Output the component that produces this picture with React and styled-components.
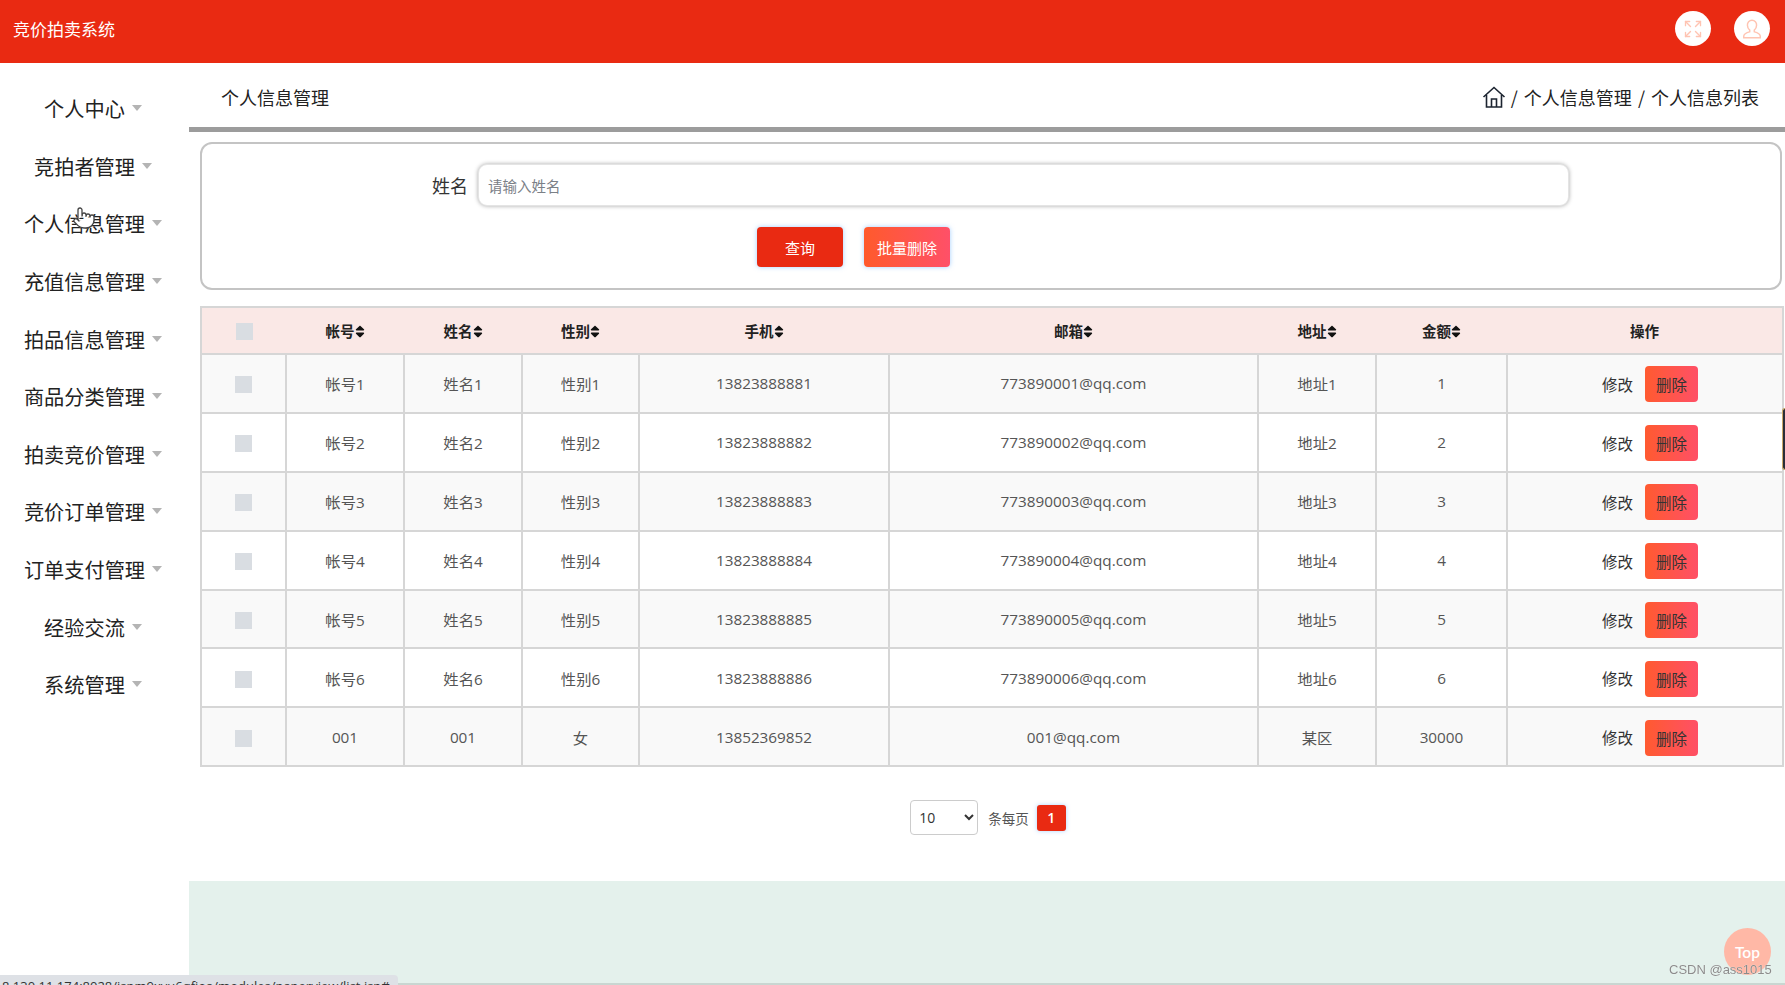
import React from 'react';
import styled, { createGlobalStyle } from 'styled-components';
import { FaSort } from 'react-icons/fa';
import { Expand, Pointer } from 'lucide-react';

const GlobalStyle = createGlobalStyle`
  html, body {
    margin: 0;
    padding: 0;
    height: 985px;
    overflow: hidden;
    background: #fff;
    font-family: "Open Sans", "Noto Sans CJK SC", sans-serif;
    color: #222;
  }
  * { box-sizing: border-box; }
`;

const Page = styled.div`
  height: 985px;
  display: flex;
  flex-direction: column;
`;

const Header = styled.header`
  height: 63px;
  flex: none;
  background: #e92a12;
  display: flex;
  align-items: center;
  justify-content: space-between;
  padding: 0 15px 6px 13px;
`;

const Brand = styled.div`
  color: #fff;
  font-size: 17px;
  font-family: "Noto Sans CJK SC", sans-serif;
`;

const HeaderIcons = styled.div`
  display: flex;
  gap: 23px;
`;

const RoundIcon = styled.div`
  width: 36px;
  height: 35px;
  border-radius: 50%;
  background: #fff;
  color: #ffc4b2;
  display: flex;
  align-items: center;
  justify-content: center;
`;

const Body = styled.div`
  flex: 1;
  display: flex;
  min-height: 0;
`;

const Sidebar = styled.nav`
  width: 189px;
  flex: none;
  padding-top: 17px;
  background: #fff;
`;

const MenuItem = styled.div`
  height: 57.6px;
  display: flex;
  align-items: center;
  justify-content: center;
  gap: 7px;
  padding-right: 3px;
  font-size: 20.2px;
  color: #222;
  font-family: "Noto Sans CJK SC", sans-serif;
`;

const Caret = styled.span`
  width: 0;
  height: 0;
  margin-top: -1px;
  border-left: 5.5px solid transparent;
  border-right: 5.5px solid transparent;
  border-top: 6px solid #b4b4b4;
`;

const Main = styled.main`
  flex: 1;
  min-width: 0;
  display: flex;
  flex-direction: column;
`;

const Crumbs = styled.div`
  height: 69px;
  flex: none;
  border-bottom: 5px solid #9c9c9c;
  display: flex;
  align-items: center;
  justify-content: space-between;
  padding: 4px 26px 0 32px;
  font-size: 18px;
  color: #222;
  font-family: "Noto Sans CJK SC", sans-serif;
`;

const CrumbPath = styled.div`
  display: flex;
  align-items: center;
  gap: 5px;
  word-spacing: 2px;
`;

const Content = styled.div`
  padding: 10px 3px 0 11px;
`;

const SearchCard = styled.section`
  height: 148px;
  border: 2px solid #c4c4c4;
  border-radius: 12px;
  padding-top: 20px;
`;

const SearchRow = styled.div`
  display: flex;
  align-items: center;
  gap: 10px;
  padding-left: 230px;
`;

const FieldLabel = styled.label`
  width: 36px;
  font-size: 18px;
  color: #333;
  font-family: "Noto Sans CJK SC", sans-serif;
  white-space: nowrap;
`;

const SearchInput = styled.input`
  width: 1091px;
  height: 42px;
  padding: 0 9px;
  border: 1px solid #e4e4e4;
  border-radius: 9px;
  outline: none;
  box-shadow: 0 0 4px rgba(0, 0, 0, 0.35);
  font-size: 14.5px;
  font-family: "Noto Sans CJK SC", sans-serif;
  &::placeholder { color: #7b8087; }
`;

const ButtonRow = styled.div`
  display: flex;
  gap: 21px;
  margin-top: 21px;
  padding-left: 555px;
`;

const ActionButton = styled.button`
  width: 86px;
  height: 40px;
  border: none;
  border-radius: 4px;
  color: #fff;
  font-size: 15px;
  font-family: "Noto Sans CJK SC", sans-serif;
  background: ${(p) => (p.$gradient ? 'linear-gradient(90deg, #ff5a2c, #ff5068)' : '#e92a12')};
  box-shadow: 0 0 5px rgba(90, 170, 255, 0.55);
  padding: 0;
`;

const Table = styled.table`
  width: 100%;
  margin-top: 16px;
  border-collapse: collapse;
  table-layout: fixed;
  font-size: 15.3px;
  color: #555;
`;

const HeadRow = styled.tr`
  height: 47px;
  background: #fae8e6;
`;

const Th = styled.th`
  border-top: 2px solid #d6d6d6;
  border-bottom: 2px solid #d6d6d6;
  padding: 0 0 1px;
  color: #222;
  font-size: 14.5px;
  font-weight: 700;
  text-align: center;
  &:first-child { border-left: 2px solid #d6d6d6; }
  &:last-child { border-right: 2px solid #d6d6d6; }
`;

const SortIcon = styled(FaSort)`
  width: 10px;
  height: 15px;
  vertical-align: -2px;
  color: #111;
`;

const Row = styled.tr`
  height: 58.9px;
  background: ${(p) => (p.$odd ? '#f9f9f9' : '#fff')};
`;

const Td = styled.td`
  border: 2px solid #d6d6d6;
  padding: 0;
  text-align: center;
`;

const CheckBox = styled.span`
  display: inline-block;
  width: 17px;
  height: 17px;
  margin-top: -1px;
  background: #d9dde2;
  vertical-align: middle;
`;

const ActionCell = styled.div`
  display: flex;
  align-items: center;
  justify-content: flex-start;
  gap: 12px;
  padding: 2px 0 0 94px;
`;

const EditLink = styled.span`
  color: #333;
  font-size: 15.5px;
  white-space: nowrap;
`;

const DeleteButton = styled.button`
  width: 53px;
  height: 36px;
  border: none;
  border-radius: 4px;
  padding: 0;
  color: #333;
  font-size: 15.5px;
  font-family: "Noto Sans CJK SC", sans-serif;
  background: linear-gradient(90deg, #ff5a30, #ff5066);
`;

const Pager = styled.div`
  height: 114px;
  display: flex;
  align-items: center;
  justify-content: center;
  gap: 10px;
  padding: 0 0 13px 2px;
  font-size: 13.5px;
  color: #555;
`;

const PageSize = styled.select`
  width: 68px;
  height: 35px;
  padding: 0 4px;
  border: 1px solid #ccc;
  border-radius: 4px;
  background: #fff;
  color: #333;
  font-size: 14px;
  font-family: "Open Sans", sans-serif;
`;

const PageNumber = styled.span`
  width: 29px;
  height: 26px;
  margin-left: -2px;
  border-radius: 3px;
  background: #e92a12;
  color: #fff;
  font-size: 14px;
  font-weight: 600;
  display: flex;
  align-items: center;
  justify-content: center;
  box-shadow: 0 0 4px rgba(90, 170, 255, 0.5);
`;

const Footer = styled.footer`
  flex: 1;
  background: #e4f1ec;
  border-bottom: 2px solid #c9d6d1;
`;

const StatusBar = styled.div`
  position: fixed;
  left: 0;
  bottom: 0;
  width: 398px;
  height: 10px;
  overflow: hidden;
  padding-left: 2px;
  background: #dee1e6;
  border-top-right-radius: 4px;
  font-size: 13px;
  line-height: 22px;
  color: #333;
  white-space: nowrap;
`;

const TopButton = styled.div`
  position: fixed;
  left: 1724px;
  top: 928px;
  width: 47px;
  height: 47px;
  border-radius: 50%;
  background: #ffb8a6;
  color: #fff;
  font-size: 15.5px;
  font-weight: 600;
  font-family: "Lato", sans-serif;
  display: flex;
  align-items: center;
  justify-content: center;
`;

const Watermark = styled.div`
  position: fixed;
  left: 1669px;
  top: 962px;
  font-size: 13px;
  font-family: "Liberation Sans", sans-serif;
  color: #8b8b8b;
  text-shadow: 0 0 1px #fff;
`;

const HandCursor = styled(Pointer)`
  position: fixed;
  left: 72px;
  top: 206px;
  fill: #fff;
  color: #444;
`;

const EdgeMark = styled.div`
  position: fixed;
  left: 1782px;
  top: 408px;
  width: 3px;
  height: 62px;
  background: #2a2d38;
  border: 1px solid #c9a868;
  border-right: none;
  border-radius: 3px 0 0 3px;
`;

const menu = [
  '个人中心', '竞拍者管理', '个人信息管理', '充值信息管理', '拍品信息管理', '商品分类管理',
  '拍卖竞价管理', '竞价订单管理', '订单支付管理', '经验交流', '系统管理',
];

const columns = [
  { w: 85, label: '' },
  { w: 118, label: '帐号', sort: true },
  { w: 118, label: '姓名', sort: true },
  { w: 117, label: '性别', sort: true },
  { w: 250, label: '手机', sort: true },
  { w: 369, label: '邮箱', sort: true },
  { w: 118, label: '地址', sort: true },
  { w: 131, label: '金额', sort: true },
  { w: 276, label: '操作' },
];

const rows = [1, 2, 3, 4, 5, 6].map((n) => [
  `帐号${n}`, `姓名${n}`, `性别${n}`, `1382388888${n}`, `77389000${n}@qq.com`, `地址${n}`, `${n}`,
]);
rows.push(['001', '001', '女', '13852369852', '001@qq.com', '某区', '30000']);

const HomeIcon = () => (
  <svg width="24" height="24" viewBox="0 0 24 24" fill="none" stroke="#1c2430" strokeWidth="1.6">
    <path d="M1.5 12 12 2.5 22.5 12" />
    <path d="M4.5 10v12h15V10" />
    <path d="M9.5 22v-8h5v8" />
  </svg>
);

const UserIcon = () => (
  <svg width="22" height="22" viewBox="0 0 24 24" fill="none" stroke="currentColor" strokeWidth="1.6">
    <path d="M12 2.5a5 5 0 0 1 5 5.5c0 2-1 4-2.5 5.2V15c3 1 6.5 2 6.5 4.8V21.5H3v-1.7C3 17 6.5 16 9.5 15v-1.8C8 12 7 10 7 8a5 5 0 0 1 5-5.5z" />
  </svg>
);

const App = () => (
  <Page>
    <GlobalStyle />
    <Header>
      <Brand>竞价拍卖系统</Brand>
      <HeaderIcons>
        <RoundIcon><Expand size={20} strokeWidth={1.6} /></RoundIcon>
        <RoundIcon><UserIcon /></RoundIcon>
      </HeaderIcons>
    </Header>
    <Body>
      <Sidebar>
        {menu.map((item) => (
          <MenuItem key={item}>
            {item}
            <Caret />
          </MenuItem>
        ))}
      </Sidebar>
      <Main>
        <Crumbs>
          <span>个人信息管理</span>
          <CrumbPath>
            <HomeIcon />
            <span>/ 个人信息管理 / 个人信息列表</span>
          </CrumbPath>
        </Crumbs>
        <Content>
          <SearchCard>
            <SearchRow>
              <FieldLabel>姓名</FieldLabel>
              <SearchInput placeholder="请输入姓名" />
            </SearchRow>
            <ButtonRow>
              <ActionButton>查询</ActionButton>
              <ActionButton $gradient>批量删除</ActionButton>
            </ButtonRow>
          </SearchCard>
          <Table>
            <colgroup>
              {columns.map((c, i) => <col key={i} width={c.w} />)}
            </colgroup>
            <thead>
              <HeadRow>
                {columns.map((c, i) => (
                  <Th key={i}>
                    {i === 0 ? <CheckBox /> : c.label}
                    {c.sort && <SortIcon />}
                  </Th>
                ))}
              </HeadRow>
            </thead>
            <tbody>
              {rows.map((row, i) => (
                <Row key={i} $odd={i % 2 === 0}>
                  <Td><CheckBox /></Td>
                  {row.map((value, j) => <Td key={j}>{value}</Td>)}
                  <Td>
                    <ActionCell>
                      <EditLink>修改</EditLink>
                      <DeleteButton>删除</DeleteButton>
                    </ActionCell>
                  </Td>
                </Row>
              ))}
            </tbody>
          </Table>
        </Content>
        <Pager>
          <PageSize defaultValue="10">
            <option value="10">10</option>
            <option value="20">20</option>
          </PageSize>
          <span>条每页</span>
          <PageNumber>1</PageNumber>
        </Pager>
        <Footer />
      </Main>
    </Body>
    <HandCursor size={24} strokeWidth={1.3} />
    <EdgeMark />
    <TopButton>Top</TopButton>
    <Watermark>CSDN @ass1015</Watermark>
    <StatusBar>8.130.11.174:8028/jspm9xyu6qfjoa/modules/paperview/list.jsp#</StatusBar>
  </Page>
);

export default App;
